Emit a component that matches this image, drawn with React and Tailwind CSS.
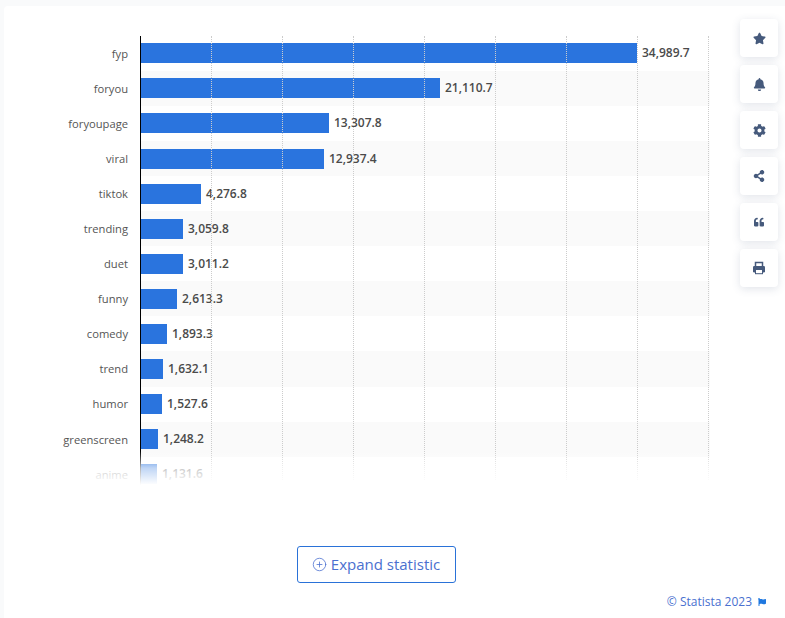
import React from "react";
import { FaStar, FaBell, FaCog, FaShareAlt, FaQuoteLeft, FaFlag } from "react-icons/fa";
import { CirclePlus } from "lucide-react";

const data = [
  ["fyp", 34989.7, 496], ["foryou", 21110.7, 299], ["foryoupage", 13307.8, 188], ["viral", 12937.4, 183],
  ["tiktok", 4276.8, 60], ["trending", 3059.8, 42], ["duet", 3011.2, 42], ["funny", 2613.3, 36],
  ["comedy", 1893.3, 26], ["trend", 1632.1, 22], ["humor", 1527.6, 21], ["greenscreen", 1248.2, 17], ["anime", 1131.6, 16],
];
const fmt = (v) => v.toLocaleString("en-US", { minimumFractionDigits: 1, maximumFractionDigits: 1 });
const gridX = [71, 142, 212.5, 283.5, 354.5, 425.5, 496.5, 568];

function PrintIcon() {
  return (
    <svg width="14" height="14" viewBox="0 0 14 14" className="text-[#465a7c]">
      <path d="M3.5 5V1.5h7V5" fill="none" stroke="currentColor" strokeWidth="1.5" />
      <rect x="1" y="5" width="12" height="6.5" rx="1.2" fill="currentColor" />
      <rect x="3.5" y="8.5" width="7" height="4.2" fill="#fff" stroke="currentColor" strokeWidth="1" />
    </svg>
  );
}

const icons = [
  <FaStar size={13} className="text-[#465a7c]" />,
  <FaBell size={13} className="text-[#465a7c]" />,
  <FaCog size={13} className="text-[#465a7c]" />,
  <FaShareAlt size={12} className="text-[#465a7c]" />,
  <FaQuoteLeft size={10} className="text-[#465a7c]" />,
  <PrintIcon />,
];

export default function App() {
  return (
    <div className="h-[618px] overflow-hidden bg-[#f9fafb] pl-[4px] pt-[6px] font-['Open_Sans',sans-serif]">
      <div className="relative flex h-[612px] rounded-tl-[4px] bg-white">
        <div className="w-[735px] shrink-0 pt-[29.76px]">
          <div className="relative h-[449.24px] overflow-hidden">
            {data.map(([label, v, w], i) => (
              <div key={label} className="flex h-[35.08px] items-center">
                <div className="w-[124px] shrink-0 text-right text-[11.2px] leading-none text-[#555]">{label}</div>
                <div className={`relative ml-[12px] flex h-full w-[570px] items-center border-l border-black ${i % 2 ? "bg-[#fafafa]" : "bg-white"}`}>
                  <div className="h-[20px] bg-[#2a74de]" style={{ width: w }} />
                  <span className="ml-[5px] text-[12px] font-semibold leading-none text-[#4a4a4a]">{fmt(v)}</span>
                </div>
              </div>
            ))}
            {gridX.map((x) => (
              <div key={x} className="absolute top-0 bottom-[5px] border-l border-dotted border-[#cccccc]" style={{ left: 136 + x }} />
            ))}
            <div className="absolute inset-x-0 bottom-0 h-[34px] bg-gradient-to-b from-white/0 via-white/70 to-white" />
          </div>
          <div className="mt-[61px] flex justify-center pl-[9px]">
            <div className="flex h-[37px] w-[159px] items-center justify-center gap-[4px] rounded-[3px] border border-[#2a72d8] text-[15px] text-[#4a70cf]">
              <CirclePlus size={15} strokeWidth={1.25} />
              <span>Expand statistic</span>
            </div>
          </div>
          <div className="mt-[13px] flex w-[762px] items-center justify-end gap-[6px] text-[12px] leading-none text-[#4a70cf]">
            <span>© Statista 2023</span>
            <FaFlag size={8} className="text-[#1f78e0]" />
          </div>
        </div>
        <div className="flex flex-col gap-[8px] pl-[1px] pt-[13px]">
          {icons.map((icon, i) => (
            <div key={i} className="flex h-[38px] w-[38px] items-center justify-center rounded-[4px] bg-white shadow-[0_2px_8px_rgba(70,90,124,0.16)]">
              {icon}
            </div>
          ))}
        </div>
      </div>
    </div>
  );
}
